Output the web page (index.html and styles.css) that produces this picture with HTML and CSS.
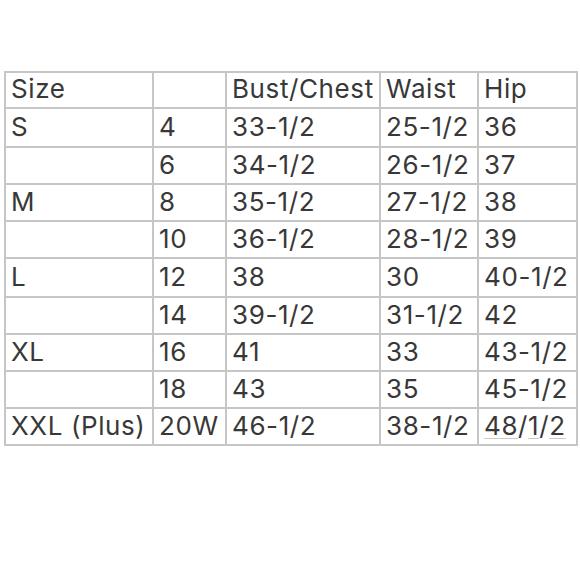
FILE: index.html
```html
<!DOCTYPE html>
<html>
<head>
<meta charset="utf-8">
<link rel="stylesheet" href="styles.css">
</head>
<body>
<table class="size-table">
  <colgroup>
    <col class="c1"><col class="c2"><col class="c3"><col class="c4"><col class="c5">
  </colgroup>
  <tr class="head"><td>Size</td><td></td><td>Bust/Chest</td><td>Waist</td><td>Hip</td></tr>
  <tr class="tall"><td>S</td><td>4</td><td>33-1/2</td><td>25-1/2</td><td>36</td></tr>
  <tr><td></td><td>6</td><td>34-1/2</td><td>26-1/2</td><td>37</td></tr>
  <tr><td>M</td><td>8</td><td>35-1/2</td><td>27-1/2</td><td>38</td></tr>
  <tr><td></td><td>10</td><td>36-1/2</td><td>28-1/2</td><td>39</td></tr>
  <tr class="tall"><td>L</td><td>12</td><td>38</td><td>30</td><td>40-1/2</td></tr>
  <tr><td></td><td>14</td><td>39-1/2</td><td>31-1/2</td><td>42</td></tr>
  <tr><td>XL</td><td>16</td><td>41</td><td>33</td><td>43-1/2</td></tr>
  <tr><td></td><td>18</td><td>43</td><td>35</td><td>45-1/2</td></tr>
  <tr class="last"><td>XXL (Plus)</td><td>20W</td><td>46-1/2</td><td>38-1/2</td><td><span class="link">48</span>/<span class="link">1</span>/<span class="link">2</span></td></tr>
</table>
</body>
</html>
```
FILE: styles.css
```css
html, body {
  margin: 0;
  padding: 0;
  background: #ffffff;
}
body {
  padding: 71px 0 0 4px;
  font-family: Inter, "Noto Sans", sans-serif;
  color: #383838;
}
.size-table {
  border-collapse: collapse;
  table-layout: fixed;
  width: 574px;
}
.size-table tr {
  height: 37px;
}
.size-table tr.head {
  height: 36px;
}
.size-table tr.tall {
  height: 39px;
}
.size-table tr.last {
  height: 37px;
}
.size-table td {
  border: 2px solid #c6c6c6;
  padding: 0 0 2px 5px;
  font-size: 26px;
  letter-spacing: 0.6px;
  line-height: 30px;
  white-space: nowrap;
  overflow: hidden;
  vertical-align: middle;
}
.c1 { width: 148px; }
.c2 { width: 73px; }
.c3 { width: 154px; }
.c4 { width: 98px; }
.c5 { width: 99px; }
.link {
  text-decoration: underline;
  text-decoration-color: #c8c8c8;
  text-underline-offset: 3px;
  text-decoration-thickness: 1px;
}
```
